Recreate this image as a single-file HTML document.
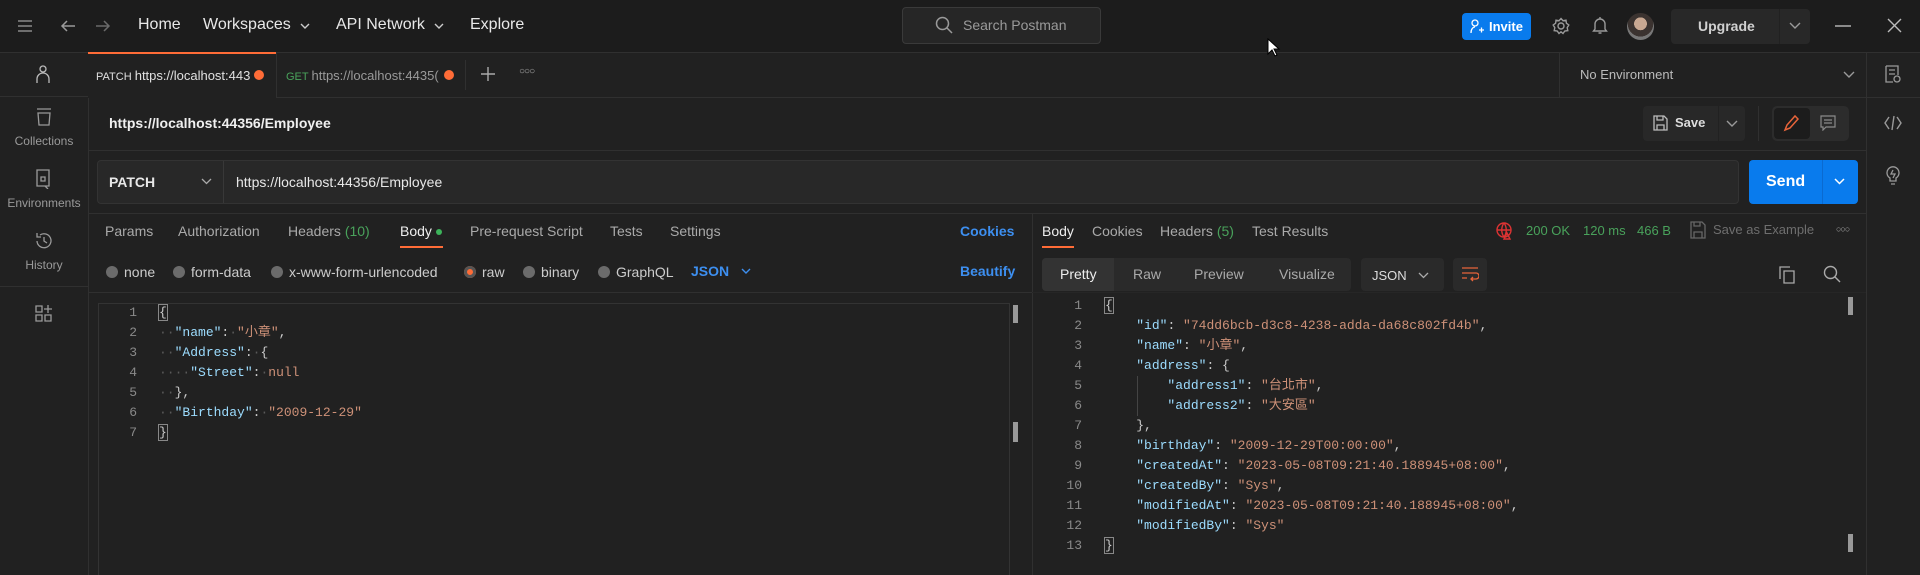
<!DOCTYPE html>
<html><head><meta charset="utf-8"><style>
*{box-sizing:border-box;margin:0;padding:0}
body{width:1920px;height:575px;background:#212121;color:#c8c8c8;font-family:"Liberation Sans","Noto Sans CJK TC",sans-serif;font-size:14px;position:relative;overflow:hidden}
.a{position:absolute;white-space:nowrap}
pre.a{white-space:pre}
.hl{position:absolute;height:1px;background:#303030}
.vl{position:absolute;width:1px;background:#303030}
.mono{font-family:"Liberation Mono","Noto Sans CJK TC",monospace;font-size:13px}
.k{color:#9cdcfe}.s{color:#ce9178}.n{color:#5a5a5a}
.ln{position:absolute;width:30px;text-align:right;color:#8a8a8a}
.dot{display:inline-block;width:10px;height:10px;border-radius:50%;background:#ff6c37;vertical-align:middle}
.rad{display:inline-block;width:12px;height:12px;border-radius:50%;background:#6b6b6b;vertical-align:-1px;margin-right:6px}
svg{position:absolute}
</style></head><body>
<!-- top bar -->
<div class="a" style="left:0;top:0;width:1920px;height:52px;background:#1c1c1c"></div>
<div class="hl" style="left:0;top:52px;width:1920px"></div>
<svg style="left:17px;top:19px" width="16" height="14" stroke="#8a8a8a" stroke-width="1.5"><path d="M1 2h14M1 7h14M1 12h14"/></svg>
<svg style="left:60px;top:18px" width="16" height="16" fill="none" stroke="#9a9a9a" stroke-width="1.5"><path d="M15 8H2M7 3L2 8l5 5"/></svg>
<svg style="left:95px;top:18px" width="16" height="16" fill="none" stroke="#6a6a6a" stroke-width="1.5"><path d="M1 8h13M9 3l5 5-5 5"/></svg>
<div class="a" style="left:138px;top:16px;font-size:16px;color:#e8e8e8">Home</div>
<div class="a" style="left:203px;top:16px;font-size:16px;color:#e8e8e8">Workspaces</div>
<svg style="left:300px;top:23px" width="10" height="6" fill="none" stroke="#ccc" stroke-width="1.4"><path d="M1 1l4 4 4-4"/></svg>
<div class="a" style="left:336px;top:16px;font-size:16px;color:#e8e8e8">API Network</div>
<svg style="left:434px;top:23px" width="10" height="6" fill="none" stroke="#ccc" stroke-width="1.4"><path d="M1 1l4 4 4-4"/></svg>
<div class="a" style="left:470px;top:16px;font-size:16px;color:#e8e8e8">Explore</div>
<div class="a" style="left:902px;top:7px;width:199px;height:37px;background:#262626;border:1px solid #3a3a3a;border-radius:4px"></div>
<svg style="left:935px;top:16px" width="18" height="18" fill="none" stroke="#9a9a9a" stroke-width="1.5"><circle cx="7.5" cy="7.5" r="6"/><path d="M12 12l5 5"/></svg>
<div class="a" style="left:963px;top:17px;color:#9a9a9a">Search Postman</div>
<svg style="left:1267px;top:38px" width="14" height="20"><path d="M1 1v15l4-4 3 6 2-1-3-6h5z" fill="#fff" stroke="#000"/></svg>
<div class="a" style="left:1462px;top:13px;width:69px;height:27px;background:#097bed;border-radius:4px;color:#fff;font-weight:bold;font-size:13px;line-height:27px;padding-left:27px">Invite</div>
<svg style="left:1470px;top:19px" width="14" height="15" fill="none" stroke="#fff" stroke-width="1.3"><circle cx="5" cy="4" r="3"/><path d="M1 14c0-4 2-6 4-6M9 11h5M11.5 8.5v5"/></svg>
<svg style="left:1552px;top:17px" width="18" height="18" fill="none" stroke="#9a9a9a" stroke-width="1.4"><circle cx="9" cy="9" r="3"/><path d="M9 1.5l2 2.2 3-.5.4 3 2.4 1.8-1.6 2.6.6 3-3 .4L11 16.5 9 14.8 7 16.5 5.2 14l-3-.4.6-3L1.2 8 3.6 6.2l.4-3 3 .5z"/></svg>
<svg style="left:1592px;top:16px" width="16" height="19" fill="none" stroke="#9a9a9a" stroke-width="1.4"><path d="M3 13V8a5 5 0 0110 0v5l1.5 2h-13zM6.5 17h3M8 1v2"/></svg>
<div class="a" style="left:1627px;top:13px;width:27px;height:27px;border-radius:50%;background:radial-gradient(circle at 50% 40%,#c9a892 0 30%,#3b3330 31% 60%,#777 61%)"></div>
<div class="a" style="left:1671px;top:9px;width:139px;height:35px;background:#282828;border-radius:4px"></div>
<div class="a" style="left:1698px;top:18px;color:#d0d0d0;font-weight:bold">Upgrade</div>
<div class="vl" style="left:1779px;top:9px;height:35px;background:#212121"></div>
<svg style="left:1789px;top:22px" width="12" height="8" fill="none" stroke="#9a9a9a" stroke-width="1.4"><path d="M1 1l5 5 5-5"/></svg>
<svg style="left:1835px;top:25px" width="16" height="2"><path d="M0 1h16" stroke="#bbb" stroke-width="1.4"/></svg>
<svg style="left:1887px;top:18px" width="15" height="15" stroke="#bbb" stroke-width="1.4"><path d="M1 1l13 13M14 1L1 14"/></svg>

<!-- left sidebar -->
<div class="vl" style="left:88px;top:52px;height:523px"></div>
<div class="hl" style="left:0;top:96px;width:88px"></div>
<div class="hl" style="left:0;top:286px;width:88px"></div>
<svg style="left:35px;top:64px" width="16" height="20" fill="none" stroke="#bbb" stroke-width="1.3"><circle cx="8" cy="5" r="3"/><path d="M2 19v-4a6 6 0 0112 0v4"/></svg>
<svg style="left:36px;top:108px" width="16" height="18" fill="none" stroke="#9a9a9a" stroke-width="1.3"><path d="M1 1h14M2 5h12l-1 12H3z"/></svg>
<div class="a" style="left:0;width:88px;text-align:center;top:134px;font-size:12px;color:#9a9a9a">Collections</div>
<svg style="left:36px;top:169px" width="14" height="20" fill="none" stroke="#9a9a9a" stroke-width="1.3"><path d="M1 1h12v16H1zM5 8h4v4H5zM9 17l3 3"/></svg>
<div class="a" style="left:0;width:88px;text-align:center;top:196px;font-size:12px;color:#9a9a9a">Environments</div>
<svg style="left:35px;top:232px" width="18" height="18" fill="none" stroke="#9a9a9a" stroke-width="1.3"><path d="M2 9a7 7 0 103-6M2 1v4h4M9 5v4l3 2"/></svg>
<div class="a" style="left:0;width:88px;text-align:center;top:258px;font-size:12px;color:#9a9a9a">History</div>
<svg style="left:35px;top:305px" width="18" height="17" fill="none" stroke="#9a9a9a" stroke-width="1.3"><path d="M1 1h6v6H1zM1 10h6v6H1zM10 10h6v6h-6zM13 0v8M9 4h8"/></svg>

<!-- tabs row -->
<div class="hl" style="left:88px;top:97px;width:1832px"></div>
<div class="a" style="left:88px;top:52px;width:188px;height:46px;background:#212121;border-top:2px solid #ff6c37"></div>
<div class="a" style="left:96px;top:68px;font-size:11px;color:#e0e0e0">PATCH <span style="font-size:13px">https://localhost:443</span></div>
<span class="dot a" style="left:254px;top:70px"></span>
<div class="vl" style="left:276px;top:52px;height:45px"></div>
<div class="a" style="left:286px;top:68px;font-size:11px;color:#49a25b">GET <span style="font-size:13px;color:#9a9a9a">https://localhost:4435(</span></div>
<span class="dot a" style="left:444px;top:70px"></span>
<div class="vl" style="left:465px;top:60px;height:30px"></div>
<svg style="left:481px;top:67px" width="14" height="14" stroke="#aaa" stroke-width="1.4"><path d="M7 0v14M0 7h14"/></svg>
<div class="a" style="left:519px;top:66px;color:#aaa;font-size:10px;letter-spacing:-1px">○○○</div>
<div class="vl" style="left:1559px;top:52px;height:45px"></div>
<div class="a" style="left:1580px;top:67px;font-size:13px;color:#bbb">No Environment</div>
<svg style="left:1843px;top:71px" width="12" height="8" fill="none" stroke="#9a9a9a" stroke-width="1.4"><path d="M1 1l5 5 5-5"/></svg>
<div class="vl" style="left:1866px;top:52px;height:523px"></div>
<svg style="left:1885px;top:65px" width="16" height="18" fill="none" stroke="#9a9a9a" stroke-width="1.3"><path d="M1 1h12v9M1 1v16h7M4 5h6M4 9h6"/><circle cx="12" cy="14" r="3"/></svg>
<svg style="left:1884px;top:115px" width="18" height="16" fill="none" stroke="#9a9a9a" stroke-width="1.4"><path d="M5 2L1 8l4 6M13 2l4 6-4 6M10 1L8 15"/></svg>
<svg style="left:1886px;top:165px" width="14" height="20" fill="none" stroke="#9a9a9a" stroke-width="1.3"><path d="M4 13a6 6 0 116 0v3H4zM5 19h4M7 5l-2 4h4l-2 4"/></svg>

<!-- title row -->
<div class="a" style="left:109px;top:115px;font-weight:bold;color:#f0f0f0;font-size:14px">https://localhost:44356/Employee</div>
<div class="a" style="left:1643px;top:106px;width:102px;height:35px;background:#282828;border-radius:4px"></div>
<div class="vl" style="left:1718px;top:106px;height:35px;background:#212121"></div>
<svg style="left:1653px;top:115px" width="15" height="16" fill="none" stroke="#bbb" stroke-width="1.3"><path d="M1 1h10l3 3v11H1zM4 1v4h6V1M4 15v-5h7v5"/></svg>
<div class="a" style="left:1675px;top:115px;color:#ddd;font-weight:bold;font-size:13px">Save</div>
<svg style="left:1726px;top:120px" width="12" height="8" fill="none" stroke="#9a9a9a" stroke-width="1.4"><path d="M1 1l5 5 5-5"/></svg>
<div class="vl" style="left:1758px;top:106px;height:35px"></div>
<div class="a" style="left:1772px;top:106px;width:77px;height:35px;background:#2c2c2c;border-radius:5px"></div>
<div class="a" style="left:1774px;top:108px;width:36px;height:31px;background:#1c1c1c;border-radius:4px"></div>
<svg style="left:1783px;top:114px" width="16" height="18" fill="none" stroke="#e8643a" stroke-width="1.5"><path d="M2 16l2-5 8-9 3 3-8 9z"/></svg>
<svg style="left:1820px;top:115px" width="16" height="16" fill="none" stroke="#8a8a8a" stroke-width="1.2"><path d="M1 1h14v11H6l-3 3v-3H1zM4 5h8M4 8h8"/></svg>
<div class="hl" style="left:88px;top:150px;width:1778px"></div>

<!-- request bar -->
<div class="a" style="left:97px;top:160px;width:1642px;height:44px;background:#282828;border:1px solid #333;border-radius:4px"></div>
<div class="vl" style="left:223px;top:161px;height:42px;background:#383838"></div>
<div class="a" style="left:109px;top:174px;font-weight:bold;color:#e8e8e8;font-size:14px">PATCH</div>
<svg style="left:201px;top:178px" width="11" height="7" fill="none" stroke="#aaa" stroke-width="1.3"><path d="M1 1l4.5 4.5L10 1"/></svg>
<div class="a" style="left:236px;top:174px;color:#e8e8e8;font-size:14px">https://localhost:44356/Employee</div>
<div class="a" style="left:1749px;top:160px;width:109px;height:44px;background:#097bed;border-radius:4px"></div>
<div class="vl" style="left:1822px;top:160px;height:44px;background:#0a6ad0"></div>
<div class="a" style="left:1766px;top:173px;color:#fff;font-weight:bold;font-size:16px">Send</div>
<svg style="left:1834px;top:178px" width="11" height="7" fill="none" stroke="#fff" stroke-width="1.5"><path d="M1 1l4.5 4.5L10 1"/></svg>
<div class="hl" style="left:88px;top:213px;width:1778px"></div>

<!-- request tabs -->
<div class="a" style="left:105px;top:223px;color:#aaa;font-size:14px">Params</div>
<div class="a" style="left:178px;top:223px;color:#aaa;font-size:14px">Authorization</div>
<div class="a" style="left:288px;top:223px;color:#aaa;font-size:14px">Headers <span style="color:#49a25b">(10)</span></div>
<div class="a" style="left:400px;top:223px;color:#eee;font-size:14px">Body</div>
<span class="a" style="left:436px;top:229px;width:6px;height:6px;border-radius:50%;background:#3cb35a"></span>
<div class="a" style="left:400px;top:246px;width:43px;height:2px;background:#ff6c37"></div>
<div class="a" style="left:470px;top:223px;color:#aaa;font-size:14px">Pre-request Script</div>
<div class="a" style="left:610px;top:223px;color:#aaa;font-size:14px">Tests</div>
<div class="a" style="left:670px;top:223px;color:#aaa;font-size:14px">Settings</div>
<div class="a" style="left:960px;top:223px;color:#3d8ff0;font-size:14px;font-weight:bold">Cookies</div>
<div class="vl" style="left:1032px;top:213px;height:362px"></div>
<div class="a" style="left:106px;top:264px;font-size:14px;color:#ccc"><span class="rad"></span>none</div>
<div class="a" style="left:173px;top:264px;font-size:14px;color:#ccc"><span class="rad"></span>form-data</div>
<div class="a" style="left:271px;top:264px;font-size:14px;color:#ccc"><span class="rad"></span>x-www-form-urlencoded</div>
<div class="a" style="left:464px;top:264px;font-size:14px;color:#ccc"><span class="rad" style="background:#ff6c37;box-shadow:inset 0 0 0 3px #555"></span>raw</div>
<div class="a" style="left:523px;top:264px;font-size:14px;color:#ccc"><span class="rad"></span>binary</div>
<div class="a" style="left:598px;top:264px;font-size:14px;color:#ccc"><span class="rad"></span>GraphQL</div>
<div class="a" style="left:691px;top:263px;font-size:14px;color:#3d8ff0;font-weight:bold">JSON</div>
<svg style="left:741px;top:268px" width="10" height="6" fill="none" stroke="#3d8ff0" stroke-width="1.4"><path d="M1 1l4 4 4-4"/></svg>
<div class="a" style="left:960px;top:263px;color:#3d8ff0;font-size:14px;font-weight:bold">Beautify</div>
<div class="hl" style="left:88px;top:292px;width:944px"></div>

<!-- request editor -->
<div class="a" style="left:98px;top:303px;width:912px;height:272px;border:1px solid #333;border-bottom:none"></div>
<div class="a" style="left:1013px;top:305px;width:5px;height:18px;background:#999"></div>
<div class="a" style="left:1013px;top:422px;width:5px;height:20px;background:#999"></div>
<div class="mono" style="position:absolute;left:0;top:303px;line-height:20px">
<div class="ln" style="left:107px;top:0">1</div><div class="ln" style="left:107px;top:20px">2</div><div class="ln" style="left:107px;top:40px">3</div><div class="ln" style="left:107px;top:60px">4</div><div class="ln" style="left:107px;top:80px">5</div><div class="ln" style="left:107px;top:100px">6</div><div class="ln" style="left:107px;top:120px">7</div>
<pre class="a mono" style="left:159px;top:0;line-height:20px;color:#ccc"><span style="outline:1px solid #888">{</span>
<span class="n">··</span><span class="k">"name"</span>:<span class="n">·</span><span class="s">"小章"</span>,
<span class="n">··</span><span class="k">"Address"</span>:<span class="n">·</span>{
<span class="n">····</span><span class="k">"Street"</span>:<span class="n">·</span><span class="s">null</span>
<span class="n">··</span>},
<span class="n">··</span><span class="k">"Birthday"</span>:<span class="n">·</span><span class="s">"2009-12-29"</span>
<span style="outline:1px solid #888">}</span></pre>
</div>

<!-- response -->
<div class="a" style="left:1042px;top:223px;color:#eee;font-size:14px">Body</div>
<div class="a" style="left:1042px;top:246px;width:32px;height:2px;background:#ff6c37"></div>
<div class="a" style="left:1092px;top:223px;color:#aaa;font-size:14px">Cookies</div>
<div class="a" style="left:1160px;top:223px;color:#aaa;font-size:14px">Headers <span style="color:#49a25b">(5)</span></div>
<div class="a" style="left:1252px;top:223px;color:#aaa;font-size:14px">Test Results</div>
<svg style="left:1496px;top:222px" width="18" height="18" fill="none" stroke="#d33" stroke-width="1.4"><circle cx="8" cy="8" r="7"/><path d="M1 8h14M8 1c-3 4-3 10 0 14M8 1c3 4 3 10 0 14M11 11l3 6h-6z"/></svg>
<div class="a" style="left:1526px;top:223px;color:#49a25b;font-size:13px">200 OK</div>
<div class="a" style="left:1583px;top:223px;color:#49a25b;font-size:13px">120 ms</div>
<div class="a" style="left:1637px;top:223px;color:#49a25b;font-size:13px">466 B</div>
<svg style="left:1690px;top:221px" width="16" height="18" fill="none" stroke="#666" stroke-width="1.3"><path d="M1 1h11l3 3v13H1zM4 1v4h6V1M4 17v-6h8v6"/></svg>
<div class="a" style="left:1713px;top:222px;color:#6e6e6e;font-size:13px">Save as Example</div>
<div class="a" style="left:1836px;top:224px;color:#aaa;font-size:9px;letter-spacing:-1px">○○○</div>

<div class="a" style="left:1042px;top:258px;width:309px;height:33px;background:#2a2a2a;border-radius:4px"></div>
<div class="a" style="left:1042px;top:258px;width:72px;height:33px;background:#333;border-radius:4px 0 0 4px"></div>
<div class="a" style="left:1060px;top:266px;color:#eee;font-size:14px">Pretty</div>
<div class="a" style="left:1133px;top:266px;color:#aaa;font-size:14px">Raw</div>
<div class="a" style="left:1194px;top:266px;color:#aaa;font-size:14px">Preview</div>
<div class="a" style="left:1279px;top:266px;color:#aaa;font-size:14px">Visualize</div>
<div class="a" style="left:1361px;top:258px;width:83px;height:33px;background:#2a2a2a;border-radius:4px"></div>
<div class="a" style="left:1372px;top:268px;color:#ddd;font-size:13px">JSON</div>
<svg style="left:1418px;top:272px" width="11" height="7" fill="none" stroke="#aaa" stroke-width="1.3"><path d="M1 1l4.5 4.5L10 1"/></svg>
<div class="a" style="left:1453px;top:258px;width:34px;height:33px;background:#2a2a2a;border-radius:4px"></div>
<svg style="left:1461px;top:266px" width="18" height="16" fill="none" stroke="#e8643a" stroke-width="1.3"><path d="M1 2h16M1 7h14a3 3 0 010 6h-5M12 11l-2 2 2 2M1 12h5"/></svg>
<svg style="left:1779px;top:266px" width="16" height="18" fill="none" stroke="#aaa" stroke-width="1.3"><path d="M1 13V1h10M5 5h10v12H5z"/></svg>
<svg style="left:1823px;top:265px" width="18" height="18" fill="none" stroke="#aaa" stroke-width="1.4"><circle cx="7.5" cy="7.5" r="6"/><path d="M12 12l5 5"/></svg>
<div class="hl" style="left:1032px;top:292px;width:834px;background:#262626"></div>
<div class="a" style="left:1848px;top:297px;width:5px;height:18px;background:#999"></div>
<div class="a" style="left:1848px;top:534px;width:5px;height:18px;background:#999"></div>

<div style="position:absolute;left:0;top:296px">
<div class="ln mono" style="left:1052px;top:0;line-height:20px">1<br>2<br>3<br>4<br>5<br>6<br>7<br>8<br>9<br>10<br>11<br>12<br>13</div>
<div class="a" style="left:1137px;top:80px;width:1px;height:40px;background:#444"></div>
<pre class="a mono" style="left:1105px;top:0;line-height:20px;color:#ccc"><span style="outline:1px solid #888">{</span>
    <span class="k">"id"</span>: <span class="s">"74dd6bcb-d3c8-4238-adda-da68c802fd4b"</span>,
    <span class="k">"name"</span>: <span class="s">"小章"</span>,
    <span class="k">"address"</span>: {
        <span class="k">"address1"</span>: <span class="s">"台北市"</span>,
        <span class="k">"address2"</span>: <span class="s">"大安區"</span>
    },
    <span class="k">"birthday"</span>: <span class="s">"2009-12-29T00:00:00"</span>,
    <span class="k">"createdAt"</span>: <span class="s">"2023-05-08T09:21:40.188945+08:00"</span>,
    <span class="k">"createdBy"</span>: <span class="s">"Sys"</span>,
    <span class="k">"modifiedAt"</span>: <span class="s">"2023-05-08T09:21:40.188945+08:00"</span>,
    <span class="k">"modifiedBy"</span>: <span class="s">"Sys"</span>
<span style="outline:1px solid #888">}</span></pre>
</div>
</body></html>
